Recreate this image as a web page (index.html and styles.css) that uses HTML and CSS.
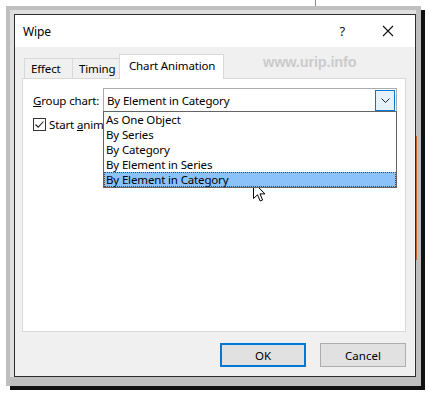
FILE: index.html
```html
<!DOCTYPE html>
<html lang="en">
<head>
    <meta charset="UTF-8">
    <meta name="viewport" content="width=device-width, initial-scale=1.0">
    <title>Wipe</title>
    <link rel="stylesheet" href="styles.css">
</head>
<body>
    <div class="stage">
        <div class="behind-line"></div>
        <div class="frame">
            <div class="bezel">
                <div class="dialog">
                    <div class="titlebar">
                        <span class="title">Wipe</span>
                        <span class="help">?</span>
                        <span class="close">
                            <svg width="12" height="12" viewBox="0 0 12 12"><path d="M1 1L11 11M11 1L1 11" stroke="#111" stroke-width="1.1" fill="none"/></svg>
                        </span>
                    </div>
                    <div class="body">
                        <div class="tabs">
                            <div class="tab tab-effect">Effect</div>
                            <div class="tab tab-timing">Timing</div>
                            <div class="tab active">Chart Animation</div>
                        </div>
                        <div class="panel">
                            <div class="row">
                                <label class="label"><u>G</u>roup chart:</label>
                                <div class="combo">
                                    <span class="combo-value">By Element in Category</span>
                                    <span class="combo-btn">
                                        <svg width="9" height="5" viewBox="0 0 9 5"><path d="M0.5 0.5L4.5 4.5L8.5 0.5" stroke="#222" stroke-width="1" fill="none"/></svg>
                                    </span>
                                    <ul class="listbox">
                                        <li>As One Object</li>
                                        <li>By Series</li>
                                        <li>By Category</li>
                                        <li>By Element in Series</li>
                                        <li class="selected">By Element in Category</li>
                                    </ul>
                                </div>
                            </div>
                            <div class="row check-row">
                                <span class="checkbox">
                                    <svg width="11" height="11" viewBox="0 0 11 11"><path d="M1.5 5.5L4.2 8.2L9.5 2.5" stroke="#222" stroke-width="1.1" fill="none"/></svg>
                                </span>
                                <span class="check-text">Start <u>a</u>nimation by drawing the chart background</span>
                            </div>
                        </div>
                        <div class="buttons">
                            <button class="btn default">OK</button>
                            <button class="btn">Cancel</button>
                        </div>
                    </div>
                </div>
            </div>
        </div>
        <div class="behind-orange"></div>
        <div class="watermark">www.urip.info</div>
        <svg class="cursor" width="13" height="20" viewBox="0 0 13 20">
            <path d="M0.5 0.5L0.5 16.5L4.5 12.8L7.2 19L9.6 18L7 11.9L12 11.9Z" fill="#fff" stroke="#000" stroke-width="1" stroke-linejoin="miter"/>
        </svg>
    </div>
</body>
</html>
```

FILE: styles.css
```css
* {
    box-sizing: border-box;
}
body {
    margin: 0;
    padding: 0;
    background-color: #fff;
    font-family: "Noto Sans", "Open Sans", sans-serif;
    font-size: 11.5px;
    letter-spacing: -0.15px;
    color: #000;
}
.stage {
    position: relative;
    width: 429px;
    height: 393px;
    overflow: hidden;
}
.frame {
    position: absolute;
    left: 6px;
    top: 6px;
    width: 415px;
    height: 380px;
    padding: 4px 5px 9px 4px;
    background-color: #bfbfbf;
    box-shadow: 4px 4px 0 #111;
}
.bezel {
    border-top: 4px solid #dfdfdf;
    border-left: 4px solid #dfdfdf;
    height: 367px;
}
.dialog {
    border: 1px solid #2d2d2d;
    height: 363px;
    background-color: #f0f0f0;
    display: flex;
    flex-direction: column;
}
.titlebar {
    height: 32px;
    flex-shrink: 0;
    background-color: #fff;
    display: flex;
    align-items: center;
    padding-left: 8px;
}
.title {
    flex: 1;
    font-size: 12px;
    margin-top: 1px;
}
.help {
    font-size: 13px;
    margin-right: 37px;
    color: #111;
}
.close {
    display: flex;
    margin-right: 21px;
}
.body {
    flex: 1;
    padding: 8px 9px 0 7px;
    display: flex;
    flex-direction: column;
}
.tabs {
    display: flex;
    align-items: flex-end;
    padding-left: 2px;
    height: 23px;
    position: relative;
    z-index: 1;
}
.tab {
    height: 20px;
    line-height: 19px;
    padding-left: 6px;
    border: 1px solid #d9d9d9;
    border-bottom: none;
    border-right: none;
    background-color: #f0f0f0;
    white-space: nowrap;
}
.tab-effect {
    width: 48px;
}
.tab-timing {
    width: 47px;
}
.tab.active {
    width: 105px;
    height: 25px;
    line-height: 21px;
    margin-bottom: -1px;
    background-color: #fff;
    border-right: 1px solid #d9d9d9;
    padding-left: 9px;
}
.panel {
    height: 254px;
    border: 1px solid #d9d9d9;
    background-color: #fff;
    padding: 9px 10px 0 10px;
}
.row {
    display: flex;
    align-items: center;
}
.label {
    width: 70px;
    flex-shrink: 0;
    white-space: nowrap;
}
.combo {
    position: relative;
    width: 294px;
    height: 24px;
    flex-shrink: 0;
    border: 1px solid #acacac;
    display: flex;
    align-items: center;
    z-index: 2;
}
.combo-value {
    flex: 1;
    padding-left: 3px;
    white-space: nowrap;
}
.combo-btn {
    width: 20px;
    height: 21px;
    margin-right: 1px;
    border: 1px solid #0078d7;
    background-color: #e5f1fb;
    display: flex;
    align-items: center;
    justify-content: center;
}
.listbox {
    position: absolute;
    left: -1px;
    top: 22px;
    width: 294px;
    margin: 0;
    padding: 0;
    list-style: none;
    background-color: #fff;
    border: 1px solid #646464;
}
.listbox li {
    height: 15px;
    line-height: 15px;
    padding-left: 2px;
    white-space: nowrap;
}
.listbox li.selected {
    background-color: #8cc2fa;
    outline: 1px dotted #6b3a1e;
    outline-offset: -1px;
}
.check-row {
    margin-top: 5px;
    gap: 3px;
}
.checkbox {
    width: 13px;
    height: 13px;
    flex-shrink: 0;
    border: 1px solid #333;
    background-color: #fff;
    display: flex;
}
/* the open list covers the rest of this label */
.check-text {
    white-space: nowrap;
    width: 54px;
    overflow: hidden;
}
.buttons {
    display: flex;
    justify-content: flex-end;
    gap: 14px;
    margin-top: 11px;
}
.btn {
    font-family: "Noto Sans", "Open Sans", sans-serif;
    font-size: 11.5px;
    width: 86px;
    height: 24px;
    background-color: #e1e1e1;
    border: 1px solid #adadad;
    padding: 0;
    color: #000;
}
.btn.default {
    border: 2px solid #0078d7;
}
.watermark {
    position: absolute;
    left: 263px;
    top: 54px;
    font-family: "Liberation Sans", Arial, sans-serif;
    font-weight: bold;
    font-size: 14.5px;
    color: #cbcbcb;
}
.cursor {
    position: absolute;
    left: 253px;
    top: 182px;
}
.behind-line {
    position: absolute;
    left: 315px;
    top: 0;
    width: 1px;
    height: 6px;
    background-color: #888;
}
.behind-orange {
    position: absolute;
    left: 416px;
    top: 136px;
    width: 1px;
    height: 124px;
    background-color: #c0622a;
}
```
